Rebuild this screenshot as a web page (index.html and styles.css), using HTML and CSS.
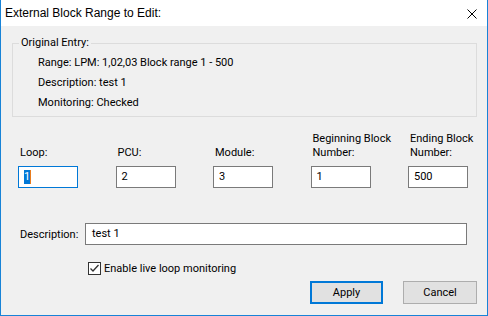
FILE: index.html
```html
<!DOCTYPE html>
<html lang="en">
<head>
  <meta charset="UTF-8">
  <title>External Block Range to Edit</title>
  <link rel="stylesheet" href="styles.css">
</head>
<body>
  <div class="window">
    <div class="titlebar">
      <span class="title">External Block Range to Edit:</span>
      <svg class="close" width="10" height="10" viewBox="0 0 10 10">
        <path d="M0.5 0.5 L9.5 9.5 M9.5 0.5 L0.5 9.5" stroke="#000" stroke-width="1" fill="none"/>
      </svg>
    </div>
    <div class="client">
      <fieldset class="group">
        <legend>Original Entry:</legend>
        <div class="entry-line">Range: LPM: 1,02,03 Block range 1 - 500</div>
        <div class="entry-line">Description: test 1</div>
        <div class="entry-line">Monitoring: Checked</div>
      </fieldset>

      <div class="fields">
        <div class="field">
          <span class="field-label">Loop:</span>
          <div class="textbox focused"><span class="selected">1</span><span class="caret"></span></div>
        </div>
        <div class="field">
          <span class="field-label">PCU:</span>
          <div class="textbox">2</div>
        </div>
        <div class="field">
          <span class="field-label">Module:</span>
          <div class="textbox">3</div>
        </div>
        <div class="field">
          <span class="field-label">Beginning Block<br>Number:</span>
          <div class="textbox">1</div>
        </div>
        <div class="field">
          <span class="field-label">Ending Block<br>Number:</span>
          <div class="textbox">500</div>
        </div>
      </div>

      <div class="desc-row">
        <span class="desc-label">Description:</span>
        <div class="textbox wide">test 1</div>
      </div>

      <div class="check-row">
        <span class="checkbox">
          <svg width="11" height="11" viewBox="0 0 11 11">
            <path d="M1.5 5.5 L4 8 L9.5 2" stroke="#333" stroke-width="1.3" fill="none"/>
          </svg>
        </span>
        <span>Enable live loop monitoring</span>
      </div>

      <div class="buttons">
        <button class="btn default">Apply</button>
        <button class="btn">Cancel</button>
      </div>
    </div>
  </div>
</body>
</html>
```

FILE: styles.css
```css
/* Reset */
* {
  margin: 0;
  padding: 0;
  box-sizing: border-box;
}
body {
  font-family: Roboto, "Liberation Sans", Arial, sans-serif;
  font-size: 11px;
  color: #000;
  background: #fff;
}
/* window frame */
.window {
  width: 488px;
  height: 316px;
  border: 1px solid #1883d7;
  border-top: none;
  background: #f0f0f0;
  display: flex;
  flex-direction: column;
}
.titlebar {
  height: 26px;
  background: #fff;
  display: flex;
  align-items: center;
  justify-content: space-between;
  padding: 0 10px 0 4px;
}
.title {
  font-family: "Liberation Sans", Arial, sans-serif;
  font-size: 12px;
}
.close {
  display: block;
  margin-top: 1px;
}
.client {
  padding: 0 10px 0 11px;
}
/* group box */
.group {
  margin-top: 10px;
  border: 1px solid #dcdcdc;
  padding: 3px 0 3px 0;
}
.group legend {
  margin-left: 6px;
  padding: 0 2px;
  line-height: 14px;
}
.entry-line {
  line-height: 20px;
  padding-left: 25px;
}
/* number fields */
.fields {
  display: grid;
  grid-template-columns: repeat(5, 60px);
  column-gap: 37.5px;
  margin: 15px 0 0 6px;
  align-items: end;
}
.field {
  display: flex;
  flex-direction: column;
}
.field-label {
  line-height: 14px;
  margin: 0 0 6px 2px;
  white-space: nowrap;
}
.textbox {
  height: 22px;
  border: 1px solid #7a7a7a;
  background: #fff;
  padding-left: 5px;
  line-height: 20px;
  display: flex;
  align-items: center;
}
.textbox.focused {
  border-color: #0078d7;
}
.selected {
  background: #0078d7;
  color: #fff;
  line-height: 14px;
}
.caret {
  width: 1px;
  height: 14px;
  background: #e87c1e;
}
/* description */
.desc-row {
  display: flex;
  align-items: center;
  margin: 35px 0 0 8px;
}
.desc-label {
  width: 65px;
}
.textbox.wide {
  width: 382px;
  padding-left: 6px;
}
/* checkbox */
.check-row {
  display: flex;
  align-items: center;
  gap: 3px;
  margin: 17px 0 0 76px;
}
.checkbox {
  width: 13px;
  height: 13px;
  border: 1px solid #333;
  background: #fff;
  display: flex;
  align-items: center;
  justify-content: center;
}
.checkbox svg {
  display: block;
}
/* buttons */
.buttons {
  display: flex;
  justify-content: flex-end;
  gap: 20px;
  margin-top: 6px;
}
.btn {
  width: 74px;
  height: 23px;
  font-family: Roboto, "Liberation Sans", Arial, sans-serif;
  font-size: 11px;
  background: #e1e1e1;
  border: 1px solid #adadad;
  color: #000;
}
.btn.default {
  width: 73px;
  border: 2px solid #0078d7;
}
```
